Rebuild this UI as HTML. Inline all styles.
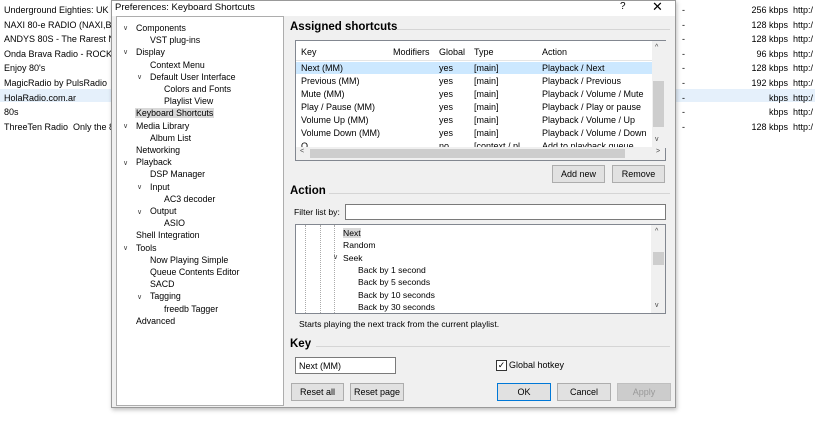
<!DOCTYPE html><html><head><style>
*{margin:0;padding:0;box-sizing:border-box}
body{width:815px;height:441px;background:#fff;font-family:"Liberation Sans",sans-serif;font-size:9px;color:#000;position:relative;overflow:hidden}
.a{position:absolute;white-space:nowrap}
.dlg{position:absolute;left:111px;top:0;width:565px;height:408px;background:#f0f0f0;border:1px solid #999;box-shadow:1px 2px 4px rgba(0,0,0,.25)}
.btn{position:absolute;height:18px;background:#e1e1e1;border:1px solid #adadad;text-align:center;line-height:16px;font-size:9px}
.box{position:absolute;background:#fff;border:1px solid #adadad}
.h{position:absolute;font-weight:bold;font-size:11.5px}
.ln{position:absolute;height:1px;background:#d5d5d5}
.chev{position:absolute;font-size:7px;color:#444}
</style></head><body>
<div class="a" style="left:0;top:89px;width:815px;height:13px;background:#e5f0fb"></div>
<div class="a" style="left:4px;top:3px;font-size:9px;line-height:14.6px">Underground Eighties: UK<br>NAXI 80-e RADIO (NAXI,Be<br>ANDYS 80S - The Rarest N<br>Onda Brava Radio - ROCK<br>Enjoy 80's<br>MagicRadio by PulsRadio<br>HolaRadio.com.ar<br>80s<br>ThreeTen Radio&nbsp; Only the 8</div>
<div class="a" style="left:682px;top:3px;line-height:14.6px">-<br>-<br>-<br>-<br>-<br>-<br>-<br>-<br>-</div>
<div class="a" style="left:740px;top:3px;width:48px;text-align:right;line-height:14.6px">256 kbps<br>128 kbps<br>128 kbps<br>96 kbps<br>128 kbps<br>192 kbps<br>kbps<br>kbps<br>128 kbps</div>
<div class="a" style="left:793px;top:3px;line-height:14.6px">http:/<br>http:/<br>http:/<br>http:/<br>http:/<br>http:/<br>http:/<br>http:/<br>http:/</div>

<div class="dlg">
<div class="a" style="left:0;top:0;width:563px;height:15px;background:#fff"></div>
<div class="a" style="left:3px;top:1px;font-size:9.5px">Preferences: Keyboard Shortcuts</div>
<div class="a" style="left:508px;top:0px;font-size:10px">?</div>
<div class="a" style="left:540px;top:-2px;font-size:13px">✕</div>
</div>

<div class="box" style="left:116px;top:16px;width:168px;height:390px">
<div class="a" style="left:7px;top:5px;line-height:12.2px;font-size:8.8px">
<div style="padding-left:12px">Components</div>
<div style="padding-left:26px">VST plug-ins</div>
<div style="padding-left:12px">Display</div>
<div style="padding-left:26px">Context Menu</div>
<div style="padding-left:26px">Default User Interface</div>
<div style="padding-left:40px">Colors and Fonts</div>
<div style="padding-left:40px">Playlist View</div>
<div style="padding-left:11px"><span style="background:#d9d9d9;padding:0 1px">Keyboard Shortcuts</span></div>
<div style="padding-left:12px">Media Library</div>
<div style="padding-left:26px">Album List</div>
<div style="padding-left:12px">Networking</div>
<div style="padding-left:12px">Playback</div>
<div style="padding-left:26px">DSP Manager</div>
<div style="padding-left:26px">Input</div>
<div style="padding-left:40px">AC3 decoder</div>
<div style="padding-left:26px">Output</div>
<div style="padding-left:40px">ASIO</div>
<div style="padding-left:12px">Shell Integration</div>
<div style="padding-left:12px">Tools</div>
<div style="padding-left:26px">Now Playing Simple</div>
<div style="padding-left:26px">Queue Contents Editor</div>
<div style="padding-left:26px">SACD</div>
<div style="padding-left:26px">Tagging</div>
<div style="padding-left:40px">freedb Tagger</div>
<div style="padding-left:12px">Advanced</div>
</div>
<div class="chev" style="left:6px;top:7px">∨</div>
<div class="chev" style="left:6px;top:31px">∨</div>
<div class="chev" style="left:20px;top:56px">∨</div>
<div class="chev" style="left:6px;top:105px">∨</div>
<div class="chev" style="left:6px;top:142px">∨</div>
<div class="chev" style="left:20px;top:166px">∨</div>
<div class="chev" style="left:20px;top:191px">∨</div>
<div class="chev" style="left:6px;top:227px">∨</div>
<div class="chev" style="left:20px;top:276px">∨</div>
</div>

<div class="h" style="left:290px;top:21px">Assigned shortcuts</div>
<div class="ln" style="left:396px;top:29px;width:274px"></div>
<div class="box" style="left:295px;top:40px;width:371px;height:121px;border-color:#828790">
<div class="a" style="left:0;top:0;width:357px;height:20px;border-bottom:1px solid #e5e5e5"></div>
<div class="a" style="left:5px;top:6px">Key</div>
<div class="a" style="left:97px;top:6px">Modifiers</div>
<div class="a" style="left:143px;top:6px">Global</div>
<div class="a" style="left:178px;top:6px">Type</div>
<div class="a" style="left:246px;top:6px">Action</div>
<div class="a" style="left:0;top:20px;width:356px;height:86px;overflow:hidden">
<div class="a" style="left:0;top:1px;width:356px;height:12px;background:#cce8ff"></div>
<div class="a" style="left:5px;top:1px;line-height:13px">Next (MM)<br>Previous (MM)<br>Mute (MM)<br>Play / Pause (MM)<br>Volume Up (MM)<br>Volume Down (MM)<br>O</div>
<div class="a" style="left:143px;top:1px;line-height:13px">yes<br>yes<br>yes<br>yes<br>yes<br>yes<br>no</div>
<div class="a" style="left:178px;top:1px;line-height:13px">[main]<br>[main]<br>[main]<br>[main]<br>[main]<br>[main]<br>[context / pl...</div>
<div class="a" style="left:246px;top:1px;line-height:13px">Playback / Next<br>Playback / Previous<br>Playback / Volume / Mute<br>Playback / Play or pause<br>Playback / Volume / Up<br>Playback / Volume / Down<br>Add to playback queue</div>
</div>
<div class="a" style="left:356px;top:0;width:14px;height:107px;background:#f0f0f0"></div>
<div class="a" style="left:357px;top:40px;width:11px;height:46px;background:#cdcdcd"></div>
<div class="a" style="left:0;top:106px;width:369px;height:13px;background:#f0f0f0"></div>
<div class="a" style="left:14px;top:108px;width:315px;height:9px;background:#cdcdcd"></div>
<div class="chev" style="left:359px;top:3px">^</div><div class="chev" style="left:359px;top:95px">v</div>
<div class="chev" style="left:4px;top:107px">&lt;</div><div class="chev" style="left:360px;top:107px">&gt;</div>
</div>
<div class="btn" style="left:552px;top:165px;width:53px">Add new</div>
<div class="btn" style="left:612px;top:165px;width:53px">Remove</div>

<div class="h" style="left:290px;top:185px">Action</div>
<div class="ln" style="left:329px;top:193px;width:341px"></div>
<div class="a" style="left:294px;top:207px;font-size:8.6px">Filter list by:</div>
<div class="box" style="left:345px;top:204px;width:321px;height:16px;border-color:#7a7a7a"></div>
<div class="box" style="left:295px;top:224px;width:371px;height:90px;border-color:#828790">
<div class="a" style="left:9px;top:0;width:1px;height:88px;border-left:1px dotted #aaa"></div>
<div class="a" style="left:24px;top:0;width:1px;height:88px;border-left:1px dotted #aaa"></div>
<div class="a" style="left:38px;top:0;width:1px;height:88px;border-left:1px dotted #aaa"></div>
<div class="a" style="left:47px;top:2px;line-height:12.3px;font-size:8.6px"><span style="background:#d9d9d9">Next</span><br>Random<br>Seek</div>
<div class="a" style="left:62px;top:39px;line-height:12.3px;font-size:8.6px">Back by 1 second<br>Back by 5 seconds<br>Back by 10 seconds<br>Back by 30 seconds</div>
<div class="chev" style="left:37px;top:28px">∨</div>
<div class="a" style="left:355px;top:0;width:14px;height:88px;background:#f0f0f0"></div>
<div class="a" style="left:357px;top:27px;width:11px;height:13px;background:#cdcdcd"></div>
<div class="chev" style="left:359px;top:3px">^</div><div class="chev" style="left:359px;top:77px">v</div>
</div>
<div class="a" style="left:299px;top:319px;font-size:8.6px">Starts playing the next track from the current playlist.</div>

<div class="h" style="left:290px;top:338px">Key</div>
<div class="ln" style="left:316px;top:346px;width:354px"></div>
<div class="box" style="left:295px;top:357px;width:101px;height:17px;border-color:#7a7a7a"><div class="a" style="left:3px;top:3px">Next (MM)</div></div>
<div class="box" style="left:496px;top:360px;width:11px;height:11px;border-color:#333;font-size:9px;line-height:9px;text-align:center">✓</div>
<div class="a" style="left:509px;top:360px">Global hotkey</div>
<div class="btn" style="left:291px;top:383px;width:53px">Reset all</div>
<div class="btn" style="left:350px;top:383px;width:54px">Reset page</div>
<div class="btn" style="left:497px;top:383px;width:54px;border:1px solid #0078d7">OK</div>
<div class="btn" style="left:557px;top:383px;width:54px">Cancel</div>
<div class="btn" style="left:617px;top:383px;width:54px;background:#ccc;border-color:#bfbfbf;color:#999">Apply</div>
</body></html>
